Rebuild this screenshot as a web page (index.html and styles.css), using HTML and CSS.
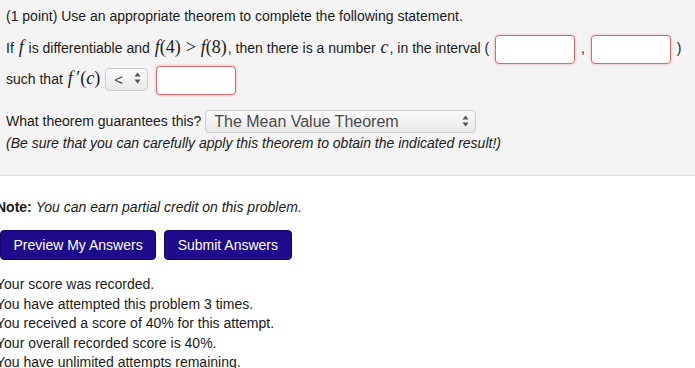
FILE: index.html
```html
<!DOCTYPE html>
<html lang="en">
<head>
    <meta charset="UTF-8">
    <title>Problem</title>
    <link rel="stylesheet" href="styles.css">
</head>
<body>

<div class="problem">
    <p class="intro">(1 point) Use an appropriate theorem to complete the following statement.</p>

    <p class="row">If <span class="math"><i>f</i></span> is differentiable and <span class="math"><i>f</i>(4)<span class="rel">&gt;</span><i>f</i>(8)</span>, then there is a number <span class="math"><i>c</i></span>, in the interval (
        <input class="answer" type="text"> , <input class="answer" type="text"> )</p>
    <p class="row">such that <span class="math"><i>f</i>&thinsp;′(<i>c</i>)</span>
        <span class="picker picker-small">
            <select><option>&lt;</option><option>=</option><option>&gt;</option></select>
            <svg class="arrows" width="7" height="12" viewBox="0 0 7 12" aria-hidden="true"><path d="M3.5 0.5 L6.5 4.5 H0.5 Z M3.5 11.5 L6.5 7.5 H0.5 Z" fill="#555"/></svg>
        </span>
        <input class="answer" type="text"></p>

    <p class="question">What theorem guarantees this?
        <span class="picker picker-wide">
            <select><option>The Mean Value Theorem</option></select>
            <svg class="arrows" width="7" height="12" viewBox="0 0 7 12" aria-hidden="true"><path d="M3.5 0.5 L6.5 4.5 H0.5 Z M3.5 11.5 L6.5 7.5 H0.5 Z" fill="#555"/></svg>
        </span>
    </p>
    <p class="hint"><em>(Be sure that you can carefully apply this theorem to obtain the indicated result!)</em></p>
</div>

<div class="footer">
    <p class="note"><b>Note:</b> <em>You can earn partial credit on this problem.</em></p>

    <div class="buttons">
        <button class="btn">Preview My Answers</button>
        <button class="btn">Submit Answers</button>
    </div>

    <div class="score">
        <p>Your score was recorded.</p>
        <p>You have attempted this problem 3 times.</p>
        <p>You received a score of 40% for this attempt.</p>
        <p>Your overall recorded score is 40%.</p>
        <p>You have unlimited attempts remaining.</p>
    </div>
</div>

</body>
</html>
```

FILE: styles.css
```css
body {
    margin: 0;
    font-family: "Liberation Sans", Arial, Helvetica, sans-serif;
    font-size: 14px;
    color: #1a1a1a;
    background-color: #fff;
    overflow: hidden;
}
p {
    margin: 0;
}

/* problem box */
.problem {
    background-color: #f4f4f4;
    border-bottom: 1px solid #dedede;
    padding: 6px 6px 0 6px;
    height: 169px;
}
.intro {
    line-height: 20px;
    margin-bottom: 7px;
}
.row {
    line-height: 29px;
    white-space: nowrap;
}
.math {
    font-family: "Liberation Serif", "Times New Roman", serif;
    font-size: 18px;
    padding: 0 1px;
}
.math i {
    font-style: italic;
}
.math .rel {
    margin: 0 5px;
}
.answer {
    width: 80px;
    height: 29px;
    box-sizing: border-box;
    border: 1px solid #e0676c;
    border-radius: 4px;
    background-color: #fff;
    box-shadow: 0 0 3px rgba(224, 80, 90, 0.45);
    vertical-align: middle;
    margin: 0 2px;
    padding: 0 4px;
}

/* select look-alike */
.picker {
    position: relative;
    display: inline-block;
    vertical-align: middle;
}
.picker select {
    -webkit-appearance: none;
    appearance: none;
    height: 23px;
    border: 1px solid #cdcdcd;
    border-radius: 4px;
    background: linear-gradient(#fbfbfb, #e9e9e9);
    color: #444;
    padding: 0 0 0 8px;
    font-family: "Liberation Sans", Arial, sans-serif;
}
.picker .arrows {
    position: absolute;
    right: 7px;
    top: 6px;
    pointer-events: none;
}
.picker-small select {
    width: 43px;
    font-size: 15px;
}
.picker-small {
    margin: 0 2px 0 0;
}
.picker-wide select {
    width: 271px;
    font-size: 16px;
    color: #4a4a4a;
}
.question {
    margin-top: 13px;
    line-height: 26px;
}
.hint {
    line-height: 16px;
}

/* below the box */
.footer {
    margin-left: -4px;
}
.note {
    margin-top: 22px;
    line-height: 18px;
}
.buttons {
    display: flex;
    gap: 8px;
    margin-top: 14px;
    margin-left: 4px;
}
.btn {
    height: 30px;
    border: 1px solid #12066a;
    border-radius: 4px;
    background-color: #1f0a8c;
    color: #fff;
    font-family: "Liberation Sans", Arial, sans-serif;
    font-size: 14px;
    padding: 0 12.5px;
}
.score {
    margin-top: 15px;
}
.score p {
    line-height: 19.5px;
}
```
